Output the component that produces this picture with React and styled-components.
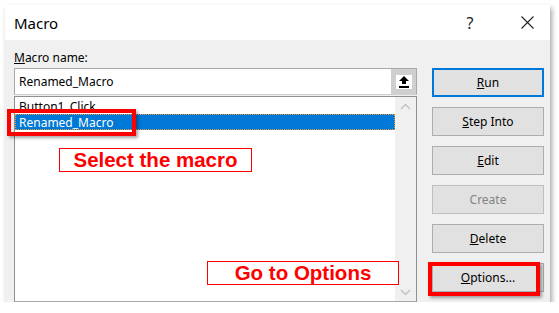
import React from 'react';
import styled, { createGlobalStyle } from 'styled-components';

const GlobalStyle = createGlobalStyle`
  body {
    margin: 0;
    background: #ffffff;
    font-family: "Segoe UI", "Noto Sans", sans-serif;
  }
`;

const Dialog = styled.div`
  margin: 5px 0 0 5px;
  width: 545px;
  height: 297px;
  background: #f0f0f0;
  box-shadow: 2px 3px 5px rgba(0, 0, 0, 0.35);
  display: flex;
  flex-direction: column;
  overflow: hidden;
`;

const TitleBar = styled.div`
  height: 35px;
  flex: none;
  background: #ffffff;
  display: flex;
  align-items: center;
  padding-left: 9px;
  font-size: 15px;
  color: #000;
`;

const Title = styled.div`
  flex: 1;
`;

const TitleButton = styled.div`
  width: ${p => p.w}px;
  height: 35px;
  display: flex;
  align-items: center;
  justify-content: center;
  font-size: 16px;
  color: #222;
`;

const Body = styled.div`
  flex: 1;
  display: flex;
  gap: 15px;
  padding-left: 9px;
  font-size: 12px;
`;

const LeftColumn = styled.div`
  width: 403px;
  display: flex;
  flex-direction: column;
`;

const Label = styled.div`
  padding-top: 9px;
  height: 19px;
  line-height: 18px;
  color: #000;
`;

const InputRow = styled.div`
  height: 25px;
  flex: none;
  display: flex;
  background: #fff;
  border: 1px solid #a8a8a8;
  border-bottom-color: #d0d0d0;
`;

const InputText = styled.div`
  flex: 1;
  padding-left: 4px;
  display: flex;
  align-items: center;
`;

const UpButton = styled.div`
  width: 25px;
  background: #cfcfcf;
  display: flex;
  align-items: center;
  justify-content: center;
`;

const UpFace = styled.div`
  width: 16px;
  height: 14px;
  background: #fff;
  display: flex;
  align-items: center;
  justify-content: center;
`;

const ListBox = styled.div`
  flex: 1;
  margin-top: 1px;
  display: flex;
  background: #fff;
  border: 1px solid #8f8f8f;
  border-bottom-color: #a8a8a8;
  position: relative;
`;

const Items = styled.div`
  flex: 1;
  padding-top: 1px;
`;

const Item = styled.div`
  height: 16px;
  line-height: 15px;
  padding-left: 3px;
  box-sizing: border-box;
  color: ${p => (p.selected ? '#fff' : '#000')};
  background: ${p => (p.selected ? '#0078d7' : 'transparent')};
  border: 1px dotted ${p => (p.selected ? '#e89a3c' : 'transparent')};
`;

const ScrollBar = styled.div`
  width: 21px;
  background: #f0f0f0;
  display: flex;
  flex-direction: column;
  justify-content: space-between;
  align-items: center;
  padding: 6px 0 5px;
`;

const Highlight = styled.div`
  position: absolute;
  left: ${p => p.x}px;
  top: ${p => p.y}px;
  width: ${p => p.w}px;
  height: ${p => p.h}px;
  box-sizing: border-box;
  border: ${p => p.t}px solid #ff0000;
  box-shadow: 2px 2px 3px rgba(0, 0, 0, 0.35);
  pointer-events: none;
`;

const Note = styled.div`
  position: absolute;
  left: ${p => p.x}px;
  top: ${p => p.y}px;
  width: ${p => p.w}px;
  height: 24px;
  box-sizing: border-box;
  border: 1px solid #ff0000;
  background: #fff;
  color: #ff0000;
  font-family: "Liberation Sans", Arial, sans-serif;
  font-weight: bold;
  font-size: 20.5px;
  line-height: 22px;
  text-align: center;
`;

const RightColumn = styled.div`
  width: 112px;
  padding-top: 28px;
  display: flex;
  flex-direction: column;
  gap: 10px;
`;

const ButtonWrap = styled.div`
  position: relative;
`;

const Button = styled.div`
  height: 29px;
  box-sizing: border-box;
  background: #e1e1e1;
  border: ${p => (p.primary ? '2px solid #0078d7' : '1px solid #adadad')};
  display: flex;
  align-items: center;
  justify-content: center;
  color: ${p => (p.disabled ? '#838383' : '#000')};
  border-color: ${p => (p.disabled ? '#bfbfbf' : undefined)};
`;

const U = styled.span`
  text-decoration: underline;
`;

const UpArrowIcon = () => (
  <svg width="12" height="12" viewBox="0 0 12 12">
    <path d="M6 0 L11 5 L8 5 L8 8 L4 8 L4 5 L1 5 Z" fill="#000" />
    <rect x="1" y="10" width="10" height="2" fill="#000" />
  </svg>
);

const Chevron = ({ down }) => (
  <svg width="11" height="7" viewBox="0 0 11 7">
    <path
      d={down ? 'M1 1 L5.5 5.5 L10 1' : 'M1 6 L5.5 1.5 L10 6'}
      fill="none"
      stroke="#c2c2c2"
      strokeWidth="1.5"
    />
  </svg>
);

const CloseIcon = () => (
  <svg width="13" height="13" viewBox="0 0 13 13">
    <path d="M0.5 0.5 L12.5 12.5 M12.5 0.5 L0.5 12.5" stroke="#222" strokeWidth="1.1" />
  </svg>
);

const App = () => {
  return (
    <>
      <GlobalStyle />
      <Dialog>
        <TitleBar>
          <Title>Macro</Title>
          <TitleButton w={68}>?</TitleButton>
          <TitleButton w={46}>
            <CloseIcon />
          </TitleButton>
        </TitleBar>
        <Body>
          <LeftColumn>
            <Label>
              <U>M</U>acro name:
            </Label>
            <InputRow>
              <InputText>Renamed_Macro</InputText>
              <UpButton>
                <UpFace>
                  <UpArrowIcon />
                </UpFace>
              </UpButton>
            </InputRow>
            <ListBox>
              <Items>
                <Item>Button1_Click</Item>
                <Item selected>Renamed_Macro</Item>
              </Items>
              <ScrollBar>
                <Chevron />
                <Chevron down />
              </ScrollBar>
              <Highlight x={-8} y={12} w={129} h={27} t={4} />
              <Note x={44} y={51} w={193}>Select the macro</Note>
              <Note x={192} y={164} w={192}>Go to Options</Note>
            </ListBox>
          </LeftColumn>
          <RightColumn>
            <Button primary>
              <span><U>R</U>un</span>
            </Button>
            <Button>
              <span><U>S</U>tep Into</span>
            </Button>
            <Button>
              <span><U>E</U>dit</span>
            </Button>
            <Button disabled>Create</Button>
            <Button>
              <span><U>D</U>elete</span>
            </Button>
            <ButtonWrap>
              <Button>
                <span><U>O</U>ptions...</span>
              </Button>
              <Highlight x={-4} y={-1} w={112} h={34} t={4} />
            </ButtonWrap>
          </RightColumn>
        </Body>
      </Dialog>
    </>
  );
};

export default App;
